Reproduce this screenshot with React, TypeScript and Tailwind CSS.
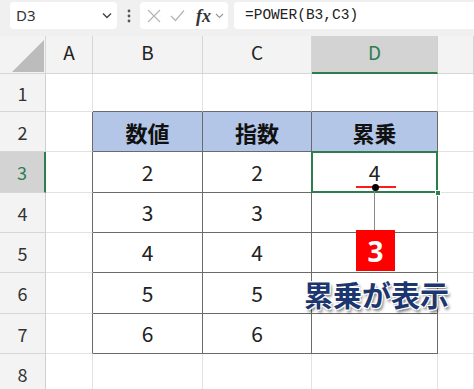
import React from "react";

const FONT = "font-['Noto_Sans_CJK_JP','Noto_Sans',sans-serif]";

const rowHeights = ["h-[38px]", "h-[40px]", "h-[41px]", "h-[40px]", "h-[40px]", "h-[41px]", "h-[40px]", "h-[40px]"];

const data: Record<number, string[]> = {
  2: ["数値", "指数", "累乗"],
  3: ["2", "2", "4"],
  4: ["3", "3", ""],
  5: ["4", "4", ""],
  6: ["5", "5", ""],
  7: ["6", "6", ""],
};

// columns: 0=A,1=B,2=C,3=D,4=E
const inTable = (r: number, c: number) => r >= 2 && r <= 7 && c >= 1 && c <= 3;

function Cell({ r, c }: { r: number; c: number }) {
  const darkR = inTable(r, c) || inTable(r, c + 1);
  const darkB = inTable(r, c) || inTable(r + 1, c);
  const rc = darkR ? "border-r-[#6a6a6a]" : "border-r-[#e2e2e2]";
  const bc = darkB ? "border-b-[#6a6a6a]" : "border-b-[#e2e2e2]";
  const head = r === 2 && inTable(r, c);
  const bg = head ? "bg-[#b4c6e7]" : "bg-white";
  const text = inTable(r, c) ? data[r][c - 1] : "";
  return (
    <div
      className={`border-r border-b ${rc} ${bc} ${bg} flex items-center justify-center ${
        head ? "text-[22px] font-bold text-[#111]" : "text-[21px] text-[#222]"
      }`}
    >
      <span className="leading-none">{text}</span>
    </div>
  );
}

function RowHeader({ r }: { r: number }) {
  const sel = r === 3;
  return (
    <div
      className={`flex items-center justify-center border-b border-b-[#d6d6d6] text-[18px] ${
        sel
          ? "bg-[#d3d3d3] text-[#2e7d4f] border-r-2 border-r-[#2e7d4f]"
          : "bg-[#f3f3f3] text-[#333] border-r border-r-[#cfcfcf]"
      }`}
    >
      <span className="leading-none">{r}</span>
    </div>
  );
}

export default function App() {
  const letters = ["A", "B", "C", "D", "E"];
  return (
    <div className={`relative w-[474px] h-[389px] overflow-hidden bg-white ${FONT}`}>
      {/* formula bar */}
      <div className="h-[36px] bg-[#f0f0f0] flex items-start pt-[2px] pl-[10px]">
        <div className="w-[107px] h-[27px] bg-white rounded-[4px] flex items-center justify-between pl-[6px] pr-[5px]">
          <span className="text-[15px] text-[#333] font-['Noto_Sans',sans-serif] leading-none">D3</span>
          <svg width="10" height="7" viewBox="0 0 10 7">
            <path d="M1 1.5 L5 5.5 L9 1.5" fill="none" stroke="#444" strokeWidth="1.4" />
          </svg>
        </div>
        <div className="w-[23px] h-[27px] flex items-center justify-center">
          <svg width="4" height="14" viewBox="0 0 4 14">
            <circle cx="2" cy="2" r="1.4" fill="#555" />
            <circle cx="2" cy="7" r="1.4" fill="#555" />
            <circle cx="2" cy="12" r="1.4" fill="#555" />
          </svg>
        </div>
        <div className="w-[88px] h-[27px] bg-white rounded-[4px] flex items-center pl-[7px]">
          <svg width="14" height="14" viewBox="0 0 14 14">
            <path d="M1 1 L13 13 M13 1 L1 13" stroke="#b5b5b5" strokeWidth="1.2" fill="none" />
          </svg>
          <svg width="15" height="13" viewBox="0 0 15 13" className="ml-[9px]">
            <path d="M1 7 L5.5 11.5 L14 1.5" stroke="#b5b5b5" strokeWidth="1.2" fill="none" />
          </svg>
          <span className="ml-[11px] text-[18px] italic font-['Liberation_Serif',serif] text-[#333] leading-none font-semibold">
            fx
          </span>
          <svg width="9" height="6" viewBox="0 0 9 6" className="ml-[4px]">
            <path d="M1 1 L4.5 4.5 L8 1" fill="none" stroke="#999" strokeWidth="1.1" />
          </svg>
        </div>
        <div className="ml-[6px] flex-1 h-[27px] bg-white rounded-l-[4px] flex items-center pl-[11px]">
          <span className="text-[14.5px] font-['Liberation_Mono',monospace] text-[#222] leading-none">=POWER(B3,C3)</span>
        </div>
      </div>

      {/* grid */}
      <div className="grid grid-cols-[46px_47px_110px_109px_126px_1fr]">
        {/* header row */}
        <div className="h-[38px] bg-[#f3f3f3] border-r border-b border-[#d6d6d6] relative">
          <svg width="46" height="38" viewBox="0 0 46 38" className="absolute left-0 top-0">
            <polygon points="44,4 44,36 12,36" fill="#bcbcbc" />
          </svg>
        </div>
        {letters.map((l, i) => {
          const sel = l === "D";
          return (
            <div
              key={l}
              className={`h-[38px] flex items-center justify-center pb-[6px] text-[19px] leading-none ${
                sel
                  ? "bg-[#d3d3d3] text-[#2e7d4f] border-b-2 border-b-[#2e7d4f] border-r border-r-[#cfcfcf]"
                  : "bg-[#f3f3f3] text-[#222] border-b border-b-[#d6d6d6] border-r border-r-[#d6d6d6]"
              }`}
            >
              {i < 4 ? l : ""}
            </div>
          );
        })}
        {[1, 2, 3, 4, 5, 6, 7, 8].map((r, ri) => (
          <React.Fragment key={r}>
            <div className={`${rowHeights[ri]} grid`}>
              <RowHeader r={r} />
            </div>
            {[0, 1, 2, 3, 4].map((c) => (
              <div key={c} className={`${rowHeights[ri]} grid`}>
                <Cell r={r} c={c} />
              </div>
            ))}
          </React.Fragment>
        ))}
      </div>

      {/* selection of D3 */}
      <div className="absolute left-[311px] top-[151px] w-[127px] h-[42px] border-2 border-[#2e7d4f] z-10 pointer-events-none" />
      <div className="absolute left-[435px] top-[190px] w-[6px] h-[6px] bg-[#2e7d4f] border border-white z-10" />

      {/* callout overlay */}
      <div className="absolute left-[356px] top-[186px] w-[40px] h-[2px] bg-[#ff1a1a] z-20" />
      <div className="absolute left-[374px] top-[188px] w-[1px] h-[42px] bg-[#8a8a8a] z-20" />
      <div className="absolute left-[372px] top-[184px] w-[7px] h-[7px] rounded-full bg-black z-20" />
      <div className="absolute left-[356px] top-[230px] w-[39px] h-[41px] bg-[#ff0000] flex items-center justify-center z-20">
        <span className="text-white text-[28px] font-bold leading-none font-['Noto_Sans',sans-serif]">3</span>
      </div>
      <div className="absolute left-[304px] top-[280px] z-20 text-[29px] font-bold leading-none text-[#1c3670] whitespace-nowrap [text-shadow:0_0_1px_#fff,1px_1px_0_#fff,-1px_-1px_0_#fff,1px_-1px_0_#fff,-1px_1px_0_#fff,2px_3px_3px_rgba(0,0,0,0.5)]">
        累乗が表示
      </div>
    </div>
  );
}
